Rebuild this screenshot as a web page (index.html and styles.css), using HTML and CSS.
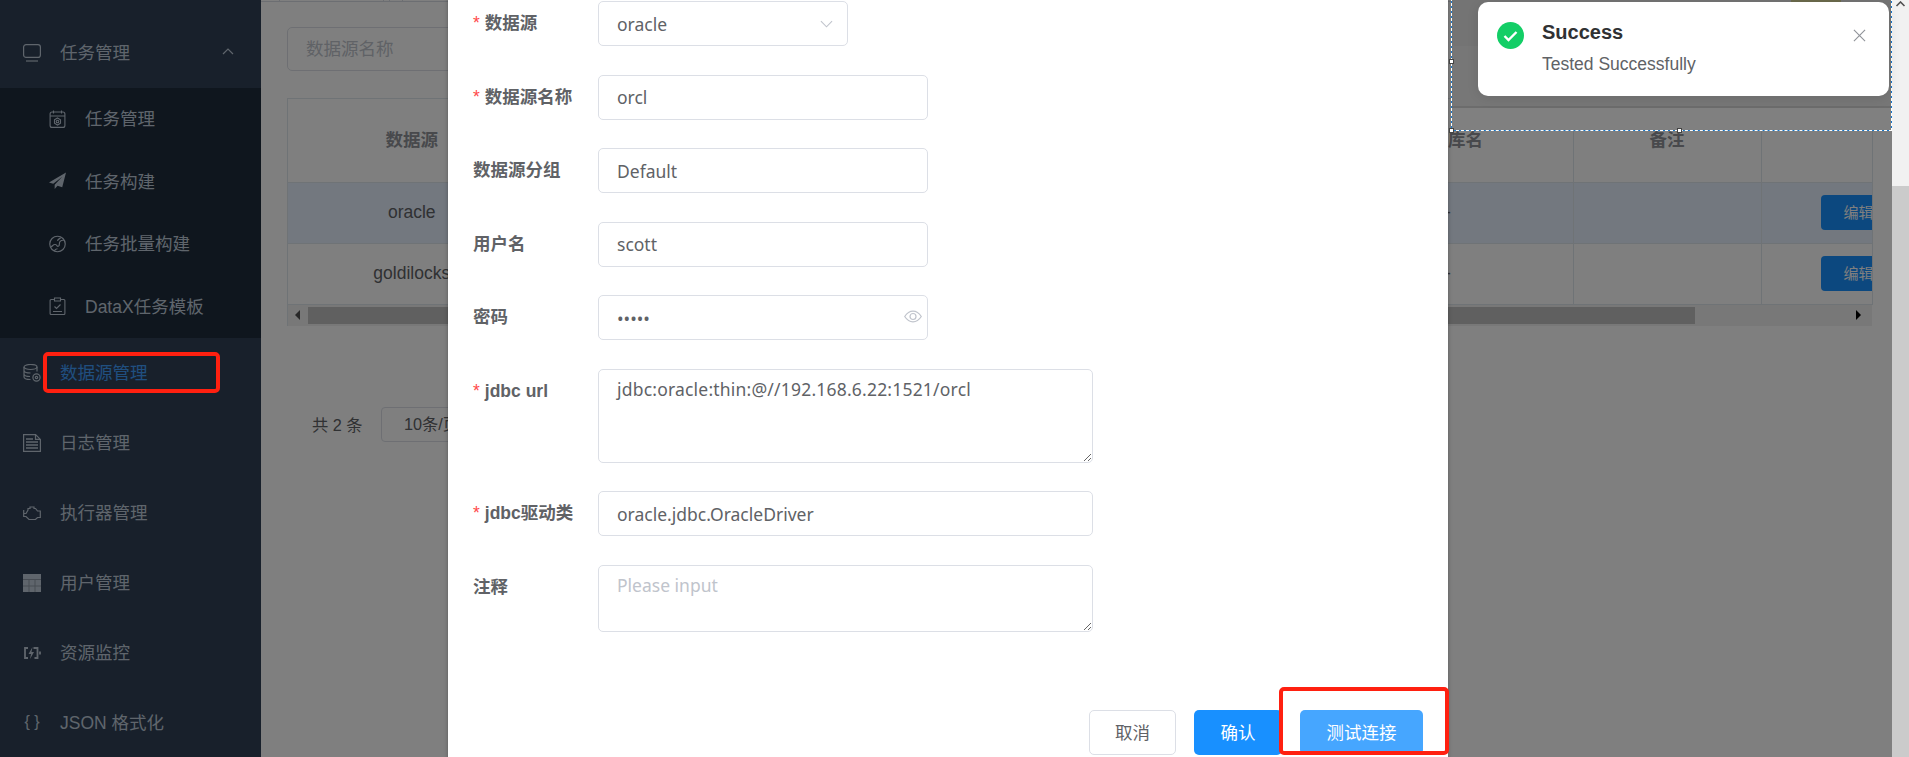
FILE: index.html
```html
<!DOCTYPE html>
<html lang="zh-CN">
<head>
    <meta charset="UTF-8">
    <meta name="viewport" content="width=device-width, initial-scale=1.0">
    <title>数据源管理</title>
    <link rel="stylesheet" href="styles.css">
</head>
<body>

<div class="page">
    <aside class="sidebar">
        <div class="menu-item">
            <svg class="menu-icon" viewBox="0 0 18 18"><rect x="0.6" y="0.6" width="16.8" height="12.8" rx="2.5"/><path d="M3 17h12"/></svg>
            <span>任务管理</span>
            <svg class="menu-arrow" viewBox="0 0 12 7"><path d="M1 6l5-5 5 5"/></svg>
        </div>
        <div class="submenu">
            <div class="submenu-item">
                <svg class="sub-icon" viewBox="0 0 16 18"><rect x="0.6" y="2" width="14.8" height="15.4" rx="2"/><path d="M0.6 6h14.8M4 0.4v3M12 0.4v3"/><circle cx="8" cy="11.5" r="1.3"/><path d="M8 8l3 1.7v3.6L8 15l-3-1.7V9.700z"/></svg>
                <span>任务管理</span>
            </div>
            <div class="submenu-item">
                <svg class="sub-icon solid" viewBox="0 0 18 18"><path d="M18 0L0 10.500l4.500 1.500L14 4.500 6 13v4.500l3-3.500 5 1.500z"/></svg>
                <span>任务构建</span>
            </div>
            <div class="submenu-item">
                <svg class="sub-icon" viewBox="0 0 16 16"><circle cx="8" cy="8" r="7.300"/><path d="M1.500 11c2-1 2.500-3 4.500-2.500s1.500 2.500 3 1.500 0-3 1.500-4.500 3-1 3.500-1M11 2c-1 1.500-2.500 1-3 3M5 14.500c.5-1.500 1.500-2 3-2"/></svg>
                <span>任务批量构建</span>
            </div>
            <div class="submenu-item">
                <svg class="sub-icon" viewBox="0 0 16 18"><path d="M5 2.500H1.600a1 1 0 0 0-1 1v13a1 1 0 0 0 1 1h12.800a1 1 0 0 0 1-1v-13a1 1 0 0 0-1-1H11"/><path d="M5 1h6v3H5zM5 9.500l2 2 4-4M3.500 14.500h9"/></svg>
                <span>DataX任务模板</span>
            </div>
        </div>
        <div class="menu-item active">
            <svg class="menu-icon plain" viewBox="0 0 18 18"><ellipse cx="7.500" cy="3" rx="6.500" ry="2.500"/><path d="M1 3v10c0 1.400 2.900 2.500 6.500 2.500M14 3v4.500M1 6.500c0 1.400 2.900 2.500 6.500 2.500M1 10c0 1.400 2.900 2.500 6 2.500"/><circle cx="13.500" cy="13.500" r="3.600"/><circle cx="13.500" cy="13.500" r="1.200"/></svg>
            <span>数据源管理</span>
        </div>
        <div class="menu-item">
            <svg class="menu-icon" viewBox="0 0 18 18"><path d="M0.600 0.600h12l4.800 4.800v12H0.600zM12.500 0.600v4.800h4.900"/><path d="M3 5h7M3 8h12M3 11h12M3 14h12" stroke-width="1.500"/></svg>
            <span>日志管理</span>
        </div>
        <div class="menu-item">
            <svg class="menu-icon" viewBox="0 0 18 18"><path d="M0.700 6v7M0.700 9.500H3L5 6V4.500h2V3h4v1.500h1.500l2 2.500h2.800v6.500h-2.800l-2 2H6l-3-3H0.700"/></svg>
            <span>执行器管理</span>
        </div>
        <div class="menu-item">
            <svg class="menu-icon grid" viewBox="0 0 18 18"><rect width="18" height="18"/><path d="M0 5.500h18M0 12h18M6 5.500V18M12 5.500V18"/></svg>
            <span>用户管理</span>
        </div>
        <div class="menu-item">
            <svg class="menu-icon thick" viewBox="0 0 18 18"><path d="M5 4H2v10h3M10.500 4H14.500v10h-3M17 7.500v3"/><path class="bolt" d="M9.500 3L5.500 10h2.500l-1 5 4-7H8.500z"/></svg>
            <span>资源监控</span>
        </div>
        <div class="menu-item">
            <span class="menu-glyph">{ }</span>
            <span>JSON 格式化</span>
        </div>
    </aside>

    <main class="content">
        <div class="tag-strip">
            <span class="tag tag-first"></span>
            <span class="tag tag-second"></span>
        </div>
        <div class="search-box">数据源名称</div>

        <div class="data-table">
            <table>
                <colgroup>
                    <col class="col-source">
                    <col class="col-name">
                    <col class="col-db">
                    <col class="col-note">
                    <col class="col-action">
                </colgroup>
                <thead>
                    <tr>
                        <th>数据源</th>
                        <th>数据源名称</th>
                        <th>数据库名</th>
                        <th>备注</th>
                        <th></th>
                    </tr>
                </thead>
                <tbody>
                    <tr class="current">
                        <td>oracle</td>
                        <td>orcl</td>
                        <td>-</td>
                        <td></td>
                        <td class="actions"><span class="edit-btn">编辑</span></td>
                    </tr>
                    <tr>
                        <td>goldilocks</td>
                        <td>goldilocks</td>
                        <td>-</td>
                        <td></td>
                        <td class="actions"><span class="edit-btn">编辑</span></td>
                    </tr>
                </tbody>
            </table>
            <div class="table-scroll">
                <span class="arrow-left"></span>
                <span class="table-thumb"></span>
                <span class="arrow-right"></span>
            </div>
        </div>

        <div class="pagination">
            <span class="total">共 2 条</span>
            <span class="page-size">10条/页</span>
        </div>
    </main>

    <div class="page-scrollbar">
        <svg class="scroll-up" viewBox="0 0 10 6"><path d="M1 5l4-4 4 4"/></svg>
        <div class="page-thumb"></div>
    </div>
</div>

<!-- dialog mask -->
<div class="mask">
    <div class="dialog">
        <form class="dialog-form">
            <div class="form-row">
                <label class="form-label required">数据源</label>
                <div class="select">
                    <input class="field" type="text" value="oracle" readonly>
                    <svg class="select-arrow" viewBox="0 0 14 8"><path d="M1 1l6 6 6-6"/></svg>
                </div>
            </div>
            <div class="form-row">
                <label class="form-label required">数据源名称</label>
                <input class="field" type="text" value="orcl">
            </div>
            <div class="form-row">
                <label class="form-label">数据源分组</label>
                <input class="field" type="text" value="Default">
            </div>
            <div class="form-row">
                <label class="form-label">用户名</label>
                <input class="field" type="text" value="scott">
            </div>
            <div class="form-row">
                <label class="form-label">密码</label>
                <div class="password">
                    <input class="field" type="password" value="scott">
                    <svg class="eye" viewBox="0 0 18 12"><path d="M0.700 6C3 2.500 6 0.700 9 0.700S15 2.500 17.300 6C15 9.500 12 11.300 9 11.300S3 9.500 0.700 6z"/><circle cx="9" cy="6" r="3"/></svg>
                </div>
            </div>
            <div class="form-row">
                <label class="form-label required">jdbc url</label>
                <textarea class="area area-url">jdbc:oracle:thin:@//192.168.6.22:1521/orcl</textarea>
            </div>
            <div class="form-row">
                <label class="form-label required">jdbc驱动类</label>
                <input class="field field-wide" type="text" value="oracle.jdbc.OracleDriver">
            </div>
            <div class="form-row">
                <label class="form-label">注释</label>
                <textarea class="area area-note" placeholder="Please input"></textarea>
            </div>
        </form>
        <div class="dialog-footer">
            <button class="btn btn-cancel" type="button">取消</button>
            <button class="btn btn-primary" type="button">确认</button>
            <button class="btn btn-test" type="button">测试连接</button>
        </div>
    </div>
</div>

<!-- pasted screenshot piece with its selection frame -->
<div class="snip">
    <span class="snip-photo"></span>
    <span class="handle handle-left"></span>
    <span class="handle handle-corner"></span>
    <span class="handle handle-bottom"></span>
</div>

<div class="toast">
    <svg class="toast-icon" viewBox="0 0 27 27"><circle cx="13.500" cy="13.500" r="13.500"/><path d="M7.500 14l4 4 8-8"/></svg>
    <div class="toast-body">
        <div class="toast-title">Success</div>
        <div class="toast-text">Tested Successfully</div>
    </div>
    <svg class="toast-close" viewBox="0 0 14 14"><path d="M1 1l12 12M13 1L1 13"/></svg>
</div>

<!-- red marks drawn on the screenshot -->
<div class="mark mark-menu"></div>
<div class="mark mark-test"></div>

</body>
</html>
```

FILE: styles.css
```css
* {
    box-sizing: border-box;
}

body {
    margin: 0;
    height: 100vh;
    overflow: hidden;
    background: #fff;
    font-family: "Liberation Sans", "Noto Sans CJK SC", sans-serif;
    font-size: 17.5px;
    color: #606266;
}

.page {
    display: flex;
    height: 757px;
}

/* Sidebar */
.sidebar {
    width: 261px;
    flex-shrink: 0;
    padding-top: 17.5px;
    background: #304156;
    color: #bfcbd9;
}

.menu-item {
    display: flex;
    align-items: center;
    height: 70px;
    padding-left: 23px;
}

.menu-item span,
.submenu-item span {
    margin-top: -2px;
}

.menu-item.active {
    color: #409eff;
}

.menu-icon {
    width: 18px;
    height: 18px;
    margin-right: 19px;
    flex-shrink: 0;
    fill: none;
    stroke: #bfcbd9;
    stroke-width: 1.2;
}

.menu-icon.grid rect {
    fill: #bfcbd9;
    stroke: none;
}

.menu-icon.grid path {
    stroke: #8f99a6;
    stroke-width: 1;
}

.menu-icon .bolt {
    fill: #bfcbd9;
    stroke: none;
}

.menu-icon.thick {
    stroke-width: 1.8;
}

.menu-item .menu-glyph {
    width: 18px;
    margin-right: 19px;
    font-size: 16px;
    text-align: center;
    white-space: nowrap;
}

.menu-arrow {
    width: 12px;
    height: 7px;
    margin-left: auto;
    margin-right: 27px;
    margin-top: -3px;
    fill: none;
    stroke: #bfcbd9;
    stroke-width: 1.2;
}

.submenu {
    background: #1f2d3d;
}

.submenu-item {
    display: flex;
    align-items: center;
    height: 62.5px;
    padding-left: 49px;
}

.sub-icon {
    width: 17px;
    height: 18px;
    margin-right: 19px;
    flex-shrink: 0;
    fill: none;
    stroke: #bfcbd9;
    stroke-width: 1.1;
}

.sub-icon.solid {
    fill: #bfcbd9;
    stroke: none;
}

/* Main content under the mask */
.content {
    flex: 1;
    min-width: 0;
    padding: 0 0 0 26px;
    background: #fff;
}

.tag-strip {
    position: relative;
    height: 2px;
    margin: 0 0 25px -26px;
    border-bottom: 1px solid #d8dce5;
}

.tag {
    display: inline-block;
    height: 2px;
    vertical-align: top;
    border-left: 1px solid #d8dce5;
    border-right: 1px solid #d8dce5;
}

.tag-first {
    width: 105px;
    margin-left: 18px;
}

.tag-second {
    width: 14px;
}

.search-box {
    width: 400px;
    height: 44px;
    padding: 0 18px;
    margin-bottom: 27px;
    line-height: 43px;
    border: 1px solid #dcdfe6;
    border-radius: 5px;
    color: #c0c4cc;
}

.data-table {
    width: 1585px;
    border: 1px solid #dfe6ec;
    border-bottom: 0;
    border-right: 0;
    font-size: 17.5px;
}

.data-table table {
    width: 100%;
    table-layout: fixed;
    border-collapse: collapse;
}

.col-source { width: 248px; }
.col-name { width: 787px; }
.col-db { width: 250px; }
.col-note { width: 188px; }
.col-action { width: 111px; }

.data-table th,
.data-table td {
    text-align: center;
    border-right: 1px solid #dfe6ec;
    border-bottom: 1px solid #dfe6ec;
    padding: 0;
}

.data-table th {
    height: 83px;
    padding-bottom: 4px;
    color: #909399;
    font-weight: bold;
}

.data-table td {
    height: 61px;
    color: #606266;
}

.data-table .current td {
    background: #e6f0ff;
}

.data-table td.actions {
    overflow: hidden;
    text-align: left;
    white-space: nowrap;
    padding-left: 59px;
}

.edit-btn {
    display: inline-block;
    width: 90px;
    height: 35px;
    padding-left: 23px;
    line-height: 35px;
    font-size: 15px;
    color: #fff;
    background: #1890ff;
    border-radius: 4px;
    vertical-align: middle;
}

.table-scroll {
    display: flex;
    align-items: center;
    height: 21px;
    background: #f1f1f1;
    padding: 0 7px;
}

.table-thumb {
    width: 1387px;
    height: 17px;
    margin-left: 8px;
    background: #c1c1c1;
}

.arrow-left {
    width: 0;
    height: 0;
    border: 5px solid transparent;
    border-left: 0;
    border-right-color: #505050;
}

.arrow-right {
    width: 0;
    height: 0;
    margin-left: auto;
    margin-right: 4px;
    border: 5px solid transparent;
    border-right: 0;
    border-left-color: #000;
}

.pagination {
    display: flex;
    align-items: center;
    height: 35px;
    margin-top: 81px;
    padding-left: 25px;
    font-size: 16.25px;
}

.total {
    width: 69px;
}

.page-size {
    width: 125px;
    height: 35px;
    line-height: 33px;
    padding-left: 22px;
    border: 1px solid #dcdfe6;
    border-radius: 4px;
}

.page-scrollbar {
    position: relative;
    z-index: 5;
    width: 17px;
    flex-shrink: 0;
    padding-top: 186px;
    background: #f1f1f1;
}

.scroll-up {
    position: absolute;
    top: 1px;
    left: 3px;
    width: 11px;
    height: 6px;
    fill: none;
    stroke: #505050;
    stroke-width: 1.6;
}

.page-thumb {
    height: 571px;
    background: #cbcbcb;
}

/* Dialog */
.mask {
    position: absolute;
    top: 0;
    left: 0;
    right: 17px;
    bottom: 0;
    overflow: hidden;
    background: rgba(0, 0, 0, 0.5);
}

.dialog {
    position: absolute;
    top: -30px;
    left: 448px;
    width: 1000px;
    height: 900px;
    padding: 31px 25px 0;
    background: #fff;
    box-shadow: 0 1px 4px rgba(0, 0, 0, 0.3);
}

.form-row {
    display: flex;
    align-items: flex-start;
    margin-bottom: 28.5px;
}

.form-label {
    width: 125px;
    flex-shrink: 0;
    line-height: 45px;
    font-weight: bold;
    color: #606266;
}

.form-label.required::before {
    content: "*";
    margin-right: 5px;
    color: #ff4949;
    font-weight: normal;
}

.field {
    display: block;
    width: 330px;
    height: 45px;
    padding: 0 18px;
    font-family: "Noto Sans", "Noto Sans CJK SC", sans-serif;
    font-size: 17.5px;
    color: #606266;
    border: 1px solid #dcdfe6;
    border-radius: 5px;
    outline: none;
}

.field-wide {
    width: 494.5px;
}

.select {
    position: relative;
    width: 250px;
}

.select .field {
    width: 100%;
}

.select-arrow {
    position: absolute;
    top: 19px;
    right: 15px;
    width: 13px;
    height: 8px;
    fill: none;
    stroke: #c0c4cc;
    stroke-width: 1.2;
}

.password {
    position: relative;
}

.eye {
    position: absolute;
    top: 15px;
    right: 6px;
    width: 18px;
    height: 13px;
    fill: none;
    stroke: #c0c4cc;
    stroke-width: 1.2;
}

.area {
    display: block;
    width: 494.5px;
    padding: 6px 18px;
    font-family: "Noto Sans", "Noto Sans CJK SC", sans-serif;
    font-size: 17.5px;
    line-height: 26px;
    color: #606266;
    border: 1px solid #dcdfe6;
    border-radius: 5px;
    outline: none;
}

.area::placeholder {
    color: #c0c4cc;
}

.area-url {
    height: 94px;
    letter-spacing: 0.2px;
}

.area-note {
    height: 67px;
}

.dialog-footer {
    display: flex;
    justify-content: flex-end;
    gap: 18px;
    margin-top: 78px;
}

.btn {
    height: 45px;
    padding: 0 0 2px;
    font-family: inherit;
    font-size: 17.5px;
    border: 1px solid transparent;
    border-radius: 5px;
    color: #fff;
}

.btn-cancel {
    width: 87px;
    color: #606266;
    background: #fff;
    border-color: #dcdfe6;
}

.btn-primary {
    width: 88px;
    background: #1890ff;
}

.btn-test {
    width: 123px;
    background: #46a6ff;
}

/* Pasted piece at the top right */
.snip {
    position: absolute;
    top: -2px;
    left: 1451px;
    width: 441px;
    height: 133px;
    z-index: 6;
    border: 1px solid #1877c9;
    background: linear-gradient(#747474 0 47px, #777 47px 107px, #6c6c6c 107px 109px, #808080 109px);
}

.snip::after {
    content: "";
    position: absolute;
    top: -1px;
    left: -1px;
    right: -1px;
    bottom: -1px;
    border: 1px dashed #fff;
}

.snip-photo {
    position: absolute;
    top: 1px;
    left: 339px;
    width: 50px;
    height: 2px;
    background: #6b6a4c;
}

.handle {
    position: absolute;
    z-index: 1;
    width: 5px;
    height: 5px;
    background: #fff;
    border: 1px solid #444;
}

.handle-left {
    top: 60px;
    left: -3px;
}

.handle-corner {
    bottom: -3px;
    left: -3px;
}

.handle-bottom {
    bottom: -3px;
    left: 225px;
}

/* Notification */
.toast {
    position: absolute;
    top: 2px;
    left: 1478px;
    z-index: 7;
    display: flex;
    width: 411px;
    height: 94px;
    padding: 20px 19px;
    background: #fff;
    border-radius: 10px;
    box-shadow: 0 2px 12px rgba(0, 0, 0, 0.1);
}

.toast-icon {
    width: 27px;
    height: 27px;
    flex-shrink: 0;
    margin-right: 18px;
}

.toast-icon circle {
    fill: #13ce66;
}

.toast-icon path {
    fill: none;
    stroke: #fff;
    stroke-width: 2.4;
}

.toast-title {
    font-size: 20px;
    font-weight: bold;
    line-height: 20px;
    color: #303133;
}

.toast-text {
    margin-top: 12px;
    line-height: 20px;
    color: #606266;
}

.toast-close {
    width: 13px;
    height: 13px;
    margin-left: auto;
    margin-top: 7px;
    margin-right: 4px;
    fill: none;
    stroke: #909399;
    stroke-width: 1.2;
}

/* Red marks */
.mark {
    position: absolute;
    z-index: 8;
    border: 4px solid #ff2010;
    border-radius: 5px;
}

.mark-menu {
    top: 352px;
    left: 43px;
    width: 177px;
    height: 41px;
}

.mark-test {
    top: 687px;
    left: 1279px;
    width: 170px;
    height: 68px;
}
```
